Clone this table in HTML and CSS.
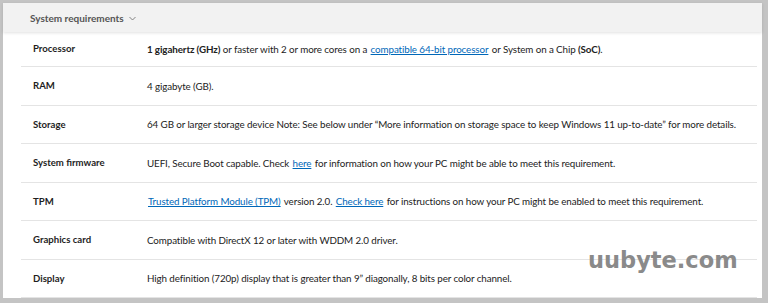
FILE: index.html
```html
<!DOCTYPE html>
<html lang="en">
<head>
    <meta charset="UTF-8">
    <meta name="viewport" content="width=device-width, initial-scale=1.0">
    <title>System requirements</title>
    <link rel="stylesheet" href="styles.css">
</head>
<body>
    <div class="panel">
        <div class="header">
            <span class="header-title">System requirements</span>
            <svg class="chevron" width="7" height="5" viewBox="0 0 7 5"><path d="M0.5 1 L3.5 4 L6.5 1" fill="none" stroke="#777" stroke-width="0.9"/></svg>
        </div>
        <div class="table">
            <div class="row first">
                <div class="label">Processor</div>
                <div class="value"><b>1 gigahertz (GHz)</b> or faster with 2 or more cores on a <a href="#">compatible 64-bit processor</a> or System on a Chip <b>(SoC)</b>.</div>
            </div>
            <div class="row">
                <div class="label">RAM</div>
                <div class="value">4 gigabyte (GB).</div>
            </div>
            <div class="row">
                <div class="label">Storage</div>
                <div class="value">64 GB or larger storage device Note: See below under “More information on storage space to keep Windows 11 up-to-date” for more details.</div>
            </div>
            <div class="row">
                <div class="label">System firmware</div>
                <div class="value">UEFI, Secure Boot capable. Check <a href="#">here</a> for information on how your PC might be able to meet this requirement.</div>
            </div>
            <div class="row">
                <div class="label">TPM</div>
                <div class="value"><a href="#">Trusted Platform Module (TPM)</a> version 2.0. <a href="#">Check here</a> for instructions on how your PC might be enabled to meet this requirement.</div>
            </div>
            <div class="row">
                <div class="label">Graphics card</div>
                <div class="value">Compatible with DirectX 12 or later with WDDM 2.0 driver.</div>
            </div>
            <div class="row">
                <div class="label">Display</div>
                <div class="value">High definition (720p) display that is greater than 9” diagonally, 8 bits per color channel.</div>
            </div>
        </div>
        <div class="watermark">uubyte.com</div>
    </div>
</body>
</html>
```

FILE: styles.css
```css
body {
    margin: 0;
    background-color: #c4c4c4;
    font-family: 'Lato', sans-serif;
    color: #262626;
    overflow: hidden;
}
.panel {
    position: relative;
    margin: 3px 6px 0 3px;
    height: 295px;
    background-color: #ffffff;
}
.header {
    height: 29px;
    display: flex;
    align-items: center;
    gap: 5px;
    padding-left: 27px;
    background-color: #f2f2f2;
    box-shadow: 0 1px 3px rgba(0,0,0,0.12);
}
.header-title {
    font-size: 10px;
    font-weight: bold;
    color: #555555;
}
.chevron {
    margin-top: 1px;
}
.table {
    margin: 0 5px 0 18px;
}
.row {
    height: 37.5px;
    display: flex;
    align-items: center;
    border-bottom: 1px solid #e4e4e4;
    font-size: 9.8px;
}
.row.first {
    height: 33px;
    padding-bottom: 1px;
}
.label {
    width: 114px;
    padding-left: 12px;
    flex-shrink: 0;
    font-size: 9.6px;
    font-weight: bold;
    color: #1e1e1e;
}
.value {
    white-space: nowrap;
    letter-spacing: -0.1px;
    color: #222222;
}
.value b {
    font-weight: bold;
}
.value a {
    color: #0067b8;
    text-decoration: underline;
    margin: 0 1px;
}
.watermark {
    position: absolute;
    left: 585px;
    top: 244px;
    font-family: 'DejaVu Sans', sans-serif;
    font-weight: bold;
    font-size: 22.5px;
    color: #8a8a8a;
}
```
